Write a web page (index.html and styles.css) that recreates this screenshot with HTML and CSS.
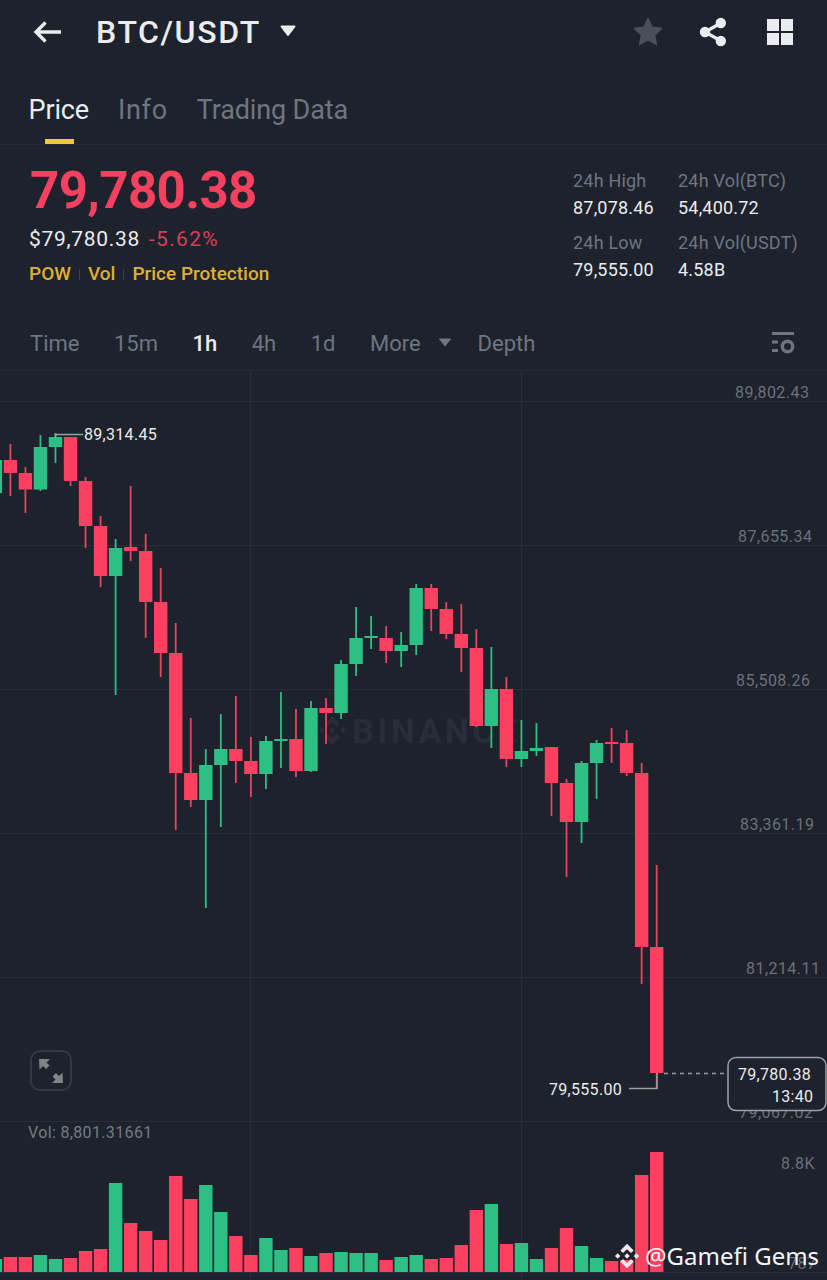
FILE: index.html
```html
<!DOCTYPE html>
<html lang="en">
<head>
<meta charset="UTF-8">
<meta name="viewport" content="width=device-width, initial-scale=1.0">
<title>BTC/USDT</title>
<link rel="stylesheet" href="styles.css">
</head>
<body>
    <header class="topbar">
        <svg class="back-icon" width="30" height="24" viewBox="0 0 30 24">
            <path d="M29 12H4M13.5 2.5L4 12l9.500 9.500" fill="none" stroke="#eaecef" stroke-width="3.4"/>
        </svg>
        <h1 class="pair">BTC/USDT</h1>
        <svg class="pair-caret" width="18" height="12" viewBox="0 0 18 12">
            <path d="M2.500 1.500h13L9 10z" fill="#eaecef" stroke="#eaecef" stroke-width="2" stroke-linejoin="round"/>
        </svg>
        <div class="top-actions">
            <svg width="30" height="30" viewBox="1 1 28 28">
                <path d="M15 2l3.900 8.400 9.100 1.100-6.700 6.300 1.800 9.200L15 22.400 6.900 27l1.800-9.200L2 11.500l9.100-1.100z" fill="#4a505c" stroke="#4a505c" stroke-linejoin="round"/>
            </svg>
            <svg class="share-icon" width="28" height="30" viewBox="0 0 28 30">
                <path d="M22 6L6 15l16 9" fill="none" stroke="#eaecef" stroke-width="3.200"/>
                <circle cx="21.800" cy="6" r="5.200" fill="#eaecef"/>
                <circle cx="21.800" cy="24" r="5.200" fill="#eaecef"/>
                <circle cx="6" cy="15" r="5.200" fill="#eaecef"/>
            </svg>
            <svg width="26" height="26" viewBox="0 0 26 26">
                <path d="M0 0h12v12H0zM14 0h12v12H14zM0 14h12v12H0zM14 14h12v12H14z" fill="#eaecef"/>
            </svg>
        </div>
    </header>

    <nav class="tabs">
        <a class="tab active">Price</a>
        <a class="tab tab-info">Info</a>
        <a class="tab">Trading Data</a>
    </nav>

    <section class="summary">
        <div class="quote">
            <div class="last-price">79,780.38</div>
            <div class="fiat"><span>$79,780.38</span> <span class="change">-5.62%</span></div>
            <div class="tags">
                <span>POW</span><i></i><span>Vol</span><i></i><span>Price Protection</span>
            </div>
        </div>
        <dl class="stats">
            <div><dt>24h High</dt><dd>87,078.46</dd></div>
            <div><dt>24h Vol(BTC)</dt><dd>54,400.72</dd></div>
            <div><dt>24h Low</dt><dd>79,555.00</dd></div>
            <div><dt>24h Vol(USDT)</dt><dd>4.58B</dd></div>
        </dl>
    </section>

    <div class="intervals">
        <span>Time</span>
        <span>15m</span>
        <span class="active">1h</span>
        <span>4h</span>
        <span>1d</span>
        <span class="more">More
            <svg width="14" height="9" viewBox="0 0 14 9">
                <path d="M1.500 1h11L7 8z" fill="#6f7580" stroke="#6f7580" stroke-linejoin="round"/>
            </svg>
        </span>
        <span>Depth</span>
        <svg class="chart-settings" width="24" height="23" viewBox="0 0 24 23">
            <path d="M1 1.500h22M1 10h6M1 18.500h6" fill="none" stroke="#6f7580" stroke-width="3"/>
            <circle cx="16.500" cy="14.500" r="5.200" fill="none" stroke="#6f7580" stroke-width="3.400"/>
        </svg>
    </div>

    <div class="chart">
        <svg id="kline" width="827" height="909" viewBox="0 371 827 909"></svg>
    </div>

    <script src="chart.js"></script>
</body>
</html>
```

FILE: styles.css
```css
* {
    box-sizing: border-box;
}
html, body {
    margin: 0;
    height: 1280px;
    overflow: hidden;
}
body {
    font-family: Roboto, "Noto Sans", sans-serif;
    background-color: #1e222d;
    color: #eaecef;
}

.topbar {
    display: flex;
    align-items: center;
    height: 64px;
    padding-left: 32px;
    padding-right: 34px;
}
.pair {
    margin: 0 0 0 34px;
    font-size: 32px;
    font-weight: 500;
    letter-spacing: 1.6px;
    line-height: 40px;
}
.pair-caret {
    margin-left: 18px;
    margin-bottom: 3px;
}
.top-actions {
    display: flex;
    align-items: center;
    gap: 36px;
    margin-left: auto;
}
.share-icon {
    margin-right: 4px;
}

.tabs {
    display: flex;
    gap: 29px;
    height: 81px;
    padding: 30px 28.5px 0;
    border-bottom: 1px solid #282c37;
}
.tab {
    position: relative;
    font-size: 27px;
    letter-spacing: -0.15px;
    line-height: 32px;
    color: #6f7580;
}
.tab-info {
    letter-spacing: 0.7px;
}
.tab.active {
    color: #eaecef;
}
.tab.active::after {
    content: "";
    position: absolute;
    left: 50%;
    bottom: 0;
    width: 29px;
    height: 5px;
    margin-left: -14px;
    background-color: #f0c93a;
}

.summary {
    display: flex;
    justify-content: space-between;
    height: 173px;
    padding: 20px 0 0 29px;
}
.last-price {
    margin-left: 1px;
    font-size: 51px;
    font-weight: 700;
    line-height: 52px;
    color: #f6405f;
    letter-spacing: -0.6px;
}
.fiat {
    margin-top: 8px;
    font-size: 21px;
    letter-spacing: 0.7px;
    line-height: 28px;
}
.change {
    margin-left: 3px;
    letter-spacing: 1.3px;
    color: #d93f58;
}
.tags {
    display: flex;
    align-items: center;
    margin-top: 9px;
    font-size: 19px;
    font-weight: 500;
    line-height: 24px;
    color: #dfb02f;
}
.tags i {
    width: 1px;
    height: 11px;
    margin: 0 8px;
    background-color: #3a3f4a;
}

.stats {
    display: grid;
    grid-template-columns: 105px 149px;
    grid-auto-rows: 53px;
    row-gap: 9px;
    margin: 3px 0 0;
    height: 115px;
}
.stats dt {
    font-size: 18px;
    letter-spacing: 0.2px;
    line-height: 26px;
    color: #6f7580;
}
.stats dd {
    margin: 0;
    font-size: 18px;
    line-height: 27px;
    letter-spacing: 0.2px;
}

.intervals {
    display: flex;
    align-items: center;
    gap: 34.5px;
    height: 52px;
    padding: 0 32px 2px 30px;
    font-size: 22px;
    color: #6f7580;
}
.intervals .active {
    color: #eaecef;
    font-weight: 500;
}
.intervals .more {
    margin-right: -9px;
}
.intervals .more svg {
    margin-left: 12px;
    vertical-align: 4px;
}
.chart-settings {
    margin-left: auto;
}

.chart {
    height: 910px;
    border-top: 1px solid #282c37;
}
#kline {
    display: block;
}

.grid-line {
    stroke: #2a2e39;
    stroke-width: 1;
}
.wick {
    stroke-width: 1.8;
}
.wick.up {
    stroke: #2ebd85;
}
.wick.down {
    stroke: #e8455f;
}
.body.up, .vol.up {
    fill: #2ebf85;
}
.body.down, .vol.down {
    fill: #fb4060;
}

.axis-label {
    font-size: 16px;
    letter-spacing: 0.45px;
    fill: #6b7079;
}
.vol-label {
    font-size: 16px;
    letter-spacing: 0.35px;
    fill: #767b84;
}
.marker-label {
    font-size: 16px;
    letter-spacing: 0.3px;
    fill: #eaecef;
}
.marker-line {
    fill: none;
    stroke: #9a9ea5;
    stroke-width: 1.5;
}
.marker-dash {
    stroke-dasharray: 4 4;
}
.price-box {
    fill: #1e222d;
    stroke: #9da1a8;
    stroke-width: 1.5;
}
.watermark {
    font-size: 34px;
    font-weight: 700;
    letter-spacing: 3.5px;
    fill: #292d38;
}
.watermark-logo {
    fill: #292d38;
}
.expand-btn {
    fill: none;
    stroke: #333843;
    stroke-width: 2;
}
.expand-arrow {
    fill: #7f838b;
}
.credit {
    font-family: "Noto Sans", sans-serif;
    font-size: 24px;
    fill: #f4f4f6;
}
.credit-logo {
    fill: #f1e6ea;
}
```

FILE: chart.js
```js
// candles: [up?, bodyTop, bodyBottom, wickTop, wickBottom, volumeTop], all in page y
var candles = [
    [1, 460, 493, 452, 500, 1259],
    [0, 460, 473, 444, 496, 1257],
    [0, 473, 489.5, 467, 513, 1257],
    [1, 447, 489.5, 435, 491, 1255],
    [1, 437, 447, 433, 463, 1259],
    [0, 437, 481, 437, 486, 1258],
    [0, 481, 526, 477, 548, 1251],
    [0, 526, 576, 516, 587, 1249],
    [1, 548, 576, 539, 695, 1183],
    [0, 547, 551, 486, 561, 1223],
    [0, 551, 602, 534, 638, 1231],
    [0, 602, 653, 568, 677, 1240],
    [0, 653, 773, 623, 830, 1176],
    [0, 773, 800, 718, 807, 1199],
    [1, 765, 800, 749, 908, 1185],
    [1, 749, 765, 714, 827, 1212],
    [0, 749, 761, 696, 783, 1236],
    [0, 761, 774, 737, 797, 1255],
    [1, 741, 774, 736, 789, 1238],
    [1, 739, 741, 692, 768, 1250],
    [0, 739, 771, 709, 777, 1248],
    [1, 708, 771, 701, 772, 1256],
    [0, 708, 713, 698, 744, 1253],
    [1, 664, 713, 660, 719, 1252],
    [1, 638, 664, 607, 676, 1253],
    [1, 636, 638, 616, 649, 1253],
    [0, 638, 651, 626, 663, 1260],
    [1, 645, 651, 632, 667, 1257],
    [1, 588, 645, 584, 655, 1255],
    [0, 588, 609, 584, 631, 1259],
    [0, 609, 634, 602, 639, 1258],
    [0, 634, 648, 604, 672, 1245],
    [0, 648, 726, 629, 727, 1210],
    [1, 689, 726, 647, 748, 1204],
    [0, 689, 759, 677, 767, 1244],
    [1, 751, 759, 720, 767, 1243],
    [1, 748, 751, 723, 756, 1259],
    [0, 747, 783, 747, 816, 1248],
    [0, 783, 822, 779, 877, 1228],
    [1, 763, 822, 761, 843, 1246],
    [1, 743, 763, 740, 799, 1258],
    [0, 742, 744, 728, 763, 1261],
    [0, 743, 773, 730, 776, 1260],
    [0, 773, 947, 763, 984, 1175],
    [0, 947, 1073, 865, 1088, 1152]
];

var svg = document.getElementById('kline');
var NS = 'http://www.w3.org/2000/svg';

function add(tag, attrs, text) {
    var el = document.createElementNS(NS, tag);
    for (var key in attrs) {
        el.setAttribute(key, attrs[key]);
    }
    if (text) {
        el.textContent = text;
    }
    svg.appendChild(el);
    return el;
}

// grid
[401, 545, 689, 833, 977, 1121, 1272].forEach(function (y) {
    add('line', { x1: 0, x2: 827, y1: y + 0.5, y2: y + 0.5, 'class': 'grid-line' });
});
[250, 521].forEach(function (x) {
    add('line', { x1: x + 0.5, x2: x + 0.5, y1: 371, y2: 1280, 'class': 'grid-line' });
});

// faint logo behind the candles
add('text', { x: 352, y: 743, 'class': 'watermark' }, 'BINANCE');
var logoPath = 'M12 1.500l5.700 5.700-2.300 2.300L12 6.100 8.600 9.500 6.300 7.200z' +
    'M12 22.500l5.700-5.700-2.300-2.300-3.400 3.400-3.400-3.400-2.300 2.300z' +
    'M12 9.700l2.300 2.300-2.300 2.300L9.700 12z' +
    'M4 9.700L6.300 12 4 14.300 1.700 12z' +
    'M20 9.700l2.300 2.300-2.300 2.300-2.300-2.300z';
add('path', { d: logoPath, 'class': 'watermark-logo', transform: 'translate(316 714) scale(1.35)' });

// candles and volume
candles.forEach(function (c, i) {
    var x = 10.4 + (i - 1) * 15.03;
    var dir = c[0] ? 'up' : 'down';
    add('line', { x1: x, x2: x, y1: c[3], y2: c[4], 'class': 'wick ' + dir });
    add('rect', { x: x - 6.7, y: c[1], width: 13.4, height: Math.max(c[2] - c[1], 2), 'class': 'body ' + dir });
    add('rect', { x: x - 6.7, y: c[5], width: 13.4, height: 1272 - c[5], 'class': 'vol ' + dir });
});

// price axis
[
    [735, 398, '89,802.43'],
    [738, 542, '87,655.34'],
    [736, 686, '85,508.26'],
    [740, 830, '83,361.19'],
    [746, 974, '81,214.11'],
    [739, 1118, '79,067.02'],
    [781, 1169, '8.8K'],
    [788, 1269, '787']
].forEach(function (l) {
    add('text', { x: l[0], y: l[1], 'class': 'axis-label' }, l[2]);
});

// high / low markers
add('path', { d: 'M55.500 438v-3.500H83', 'class': 'marker-line' });
add('text', { x: 84, y: 440, 'class': 'marker-label' }, '89,314.45');
add('path', { d: 'M629 1088.500h28V1073', 'class': 'marker-line' });
add('text', { x: 549, y: 1095, 'class': 'marker-label' }, '79,555.00');

// last price tag
add('line', { x1: 664, x2: 728, y1: 1073.5, y2: 1073.5, 'class': 'marker-line marker-dash' });
add('rect', { x: 728, y: 1057.5, width: 98, height: 53, rx: 8, 'class': 'price-box' });
add('text', { x: 738, y: 1080, 'class': 'marker-label' }, '79,780.38');
add('text', { x: 772, y: 1102, 'class': 'marker-label' }, '13:40');

// expand button
add('rect', { x: 31, y: 1051, width: 40, height: 39, rx: 9, 'class': 'expand-btn' });
add('path', { d: 'M39 1059h11l-3.500 3.500 3 3-3.500 3.500-3-3-3.500 3.500zM63 1083H52l3.500-3.500-3-3 3.500-3.500 3 3 3.500-3.500z', 'class': 'expand-arrow' });

add('text', { x: 28, y: 1138, 'class': 'vol-label' }, 'Vol: 8,801.31661');

// reposted-by mark over the corner
add('path', { d: logoPath, 'class': 'credit-logo', transform: 'translate(613 1242) scale(1.17)' });
add('text', { x: 645, y: 1265, 'class': 'credit' }, '@Gamefi Gems');
```
